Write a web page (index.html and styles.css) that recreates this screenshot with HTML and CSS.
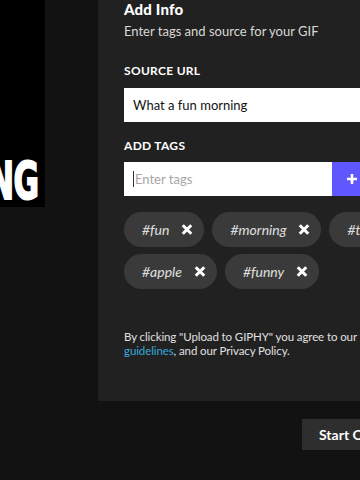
FILE: index.html
```html
<!DOCTYPE html>
<html lang="en">
<head>
<meta charset="UTF-8" />
<meta name="viewport" content="width=device-width, initial-scale=1" />
<title>Upload - Add Info</title>
<link rel="stylesheet" href="styles.css">
</head>
<body>
<div id="pagina">
    <div class="preview">
        <div class="gif"><span>GOOD MORNING</span></div>
    </div>

    <div class="principal">
        <div class="painel">
            <h2 class="titulo">Add Info</h2>
            <p class="subtitulo">Enter tags and source for your GIF</p>

            <label class="rotulo">Source URL</label>
            <div class="campo">What a fun morning</div>

            <label class="rotulo rotuloTags">Add Tags</label>
            <div class="linhaTags">
                <div class="campo campoTags"><span class="cursor"></span>Enter tags</div>
                <div class="btnMais">
                    <svg width="12" height="12" viewBox="0 0 12 12"><path d="M6 1v10M1 6h10" stroke="#fff" stroke-width="2.6"/></svg>
                </div>
            </div>

            <div class="tags">
                <div class="tag"><span>#fun</span><i class="fechar"></i></div>
                <div class="tag"><span>#morning</span><i class="fechar"></i></div>
                <div class="tag"><span>#tuesday</span><i class="fechar"></i></div>
                <div class="tag"><span>#apple</span><i class="fechar"></i></div>
                <div class="tag"><span>#funny</span><i class="fechar"></i></div>
            </div>

            <p class="aviso">By clicking "Upload to GIPHY" you agree to our <a href="#">terms of service and community guidelines</a>, and our Privacy Policy.</p>
        </div>

        <div class="acoes">
            <div class="botao">Start Over</div>
            <div class="botao enviar">Upload to GIPHY</div>
        </div>
    </div>
</div>
</body>
</html>
```

FILE: styles.css
```css
body{
    margin: 0;
    padding: 0;
    background-color: #121212;
    font-family: Lato, "Noto Sans", sans-serif;
    color: #fff;
    overflow: hidden;
}
#pagina{
    display: flex;
    width: 360px;
    height: 480px;
    overflow: hidden;
}
.preview{
    width: 98px;
    flex-shrink: 0;
}
.gif{
    width: 45px;
    height: 207px;
    background-color: #000;
    display: flex;
    justify-content: flex-end;
    align-items: flex-end;
    overflow: hidden;
    padding-right: 7px;
    box-sizing: border-box;
}
.gif span{
    font-family: "DejaVu Sans", sans-serif;
    font-weight: bold;
    font-size: 52px;
    line-height: 52px;
    white-space: nowrap;
    letter-spacing: -1px;
    -webkit-text-stroke: 2px #fff;
    transform: scaleX(0.6);
    transform-origin: right bottom;
}
.principal{
    flex-shrink: 0;
    width: 456px;
}
.painel{
    background-color: #212121;
    height: 401px;
    box-sizing: border-box;
    padding: 0 26px;
}
.titulo{
    margin: 0;
    font-size: 15px;
    line-height: 18px;
    font-weight: 900;
    letter-spacing: 0.2px;
}
.subtitulo{
    margin: 4px 0 0;
    font-size: 13px;
    line-height: 18px;
    color: #d8d8d8;
}
.rotulo{
    display: block;
    margin-top: 24px;
    font-size: 12px;
    line-height: 14px;
    font-weight: bold;
    text-transform: uppercase;
    letter-spacing: 0.3px;
}
.rotuloTags{
    margin-top: 17px;
}
.campo{
    background-color: #fff;
    height: 34px;
    margin-top: 10px;
    padding: 0 9px;
    display: flex;
    align-items: center;
    font-size: 13px;
    color: #121212;
}
.linhaTags{
    display: flex;
    margin-top: 9px;
}
.campoTags{
    margin-top: 0;
    width: 190px;
    color: #a6a6a6;
}
.cursor{
    width: 1px;
    height: 16px;
    background-color: #333;
    margin-right: 1px;
}
.btnMais{
    width: 40px;
    height: 34px;
    background-color: #6157ff;
    display: flex;
    justify-content: center;
    align-items: center;
    padding-right: 4px;
}
.tags{
    display: flex;
    flex-wrap: wrap;
    gap: 7px 8px;
    margin-top: 16px;
}
.tag{
    height: 35px;
    border-radius: 18px;
    background-color: #3a3a3a;
    display: flex;
    align-items: center;
    padding: 0 12px 0 18px;
    font-size: 14px;
    font-style: italic;
    color: #e0e0e0;
}
.fechar{
    position: relative;
    width: 10px;
    height: 10px;
    margin-left: 13px;
}
.fechar::before,
.fechar::after{
    content: "";
    position: absolute;
    left: -1px;
    top: 3.5px;
    width: 12px;
    height: 3px;
    background-color: #fff;
    transform: rotate(45deg);
}
.fechar::after{
    transform: rotate(-45deg);
}
.aviso{
    margin: 41px 0 0;
    font-size: 11.5px;
    line-height: 14px;
    letter-spacing: -0.1px;
    color: #e0e0e0;
}
.aviso a{
    color: #37a9dc;
    text-decoration: none;
}
.acoes{
    display: flex;
    gap: 10px;
    margin-top: 18px;
    padding-left: 204px;
}
.botao{
    height: 31px;
    background-color: #2e2e2e;
    padding: 0 17px;
    display: flex;
    align-items: center;
    font-size: 14px;
    font-weight: bold;
    white-space: nowrap;
}
.enviar{
    background-color: #6157ff;
}
```
